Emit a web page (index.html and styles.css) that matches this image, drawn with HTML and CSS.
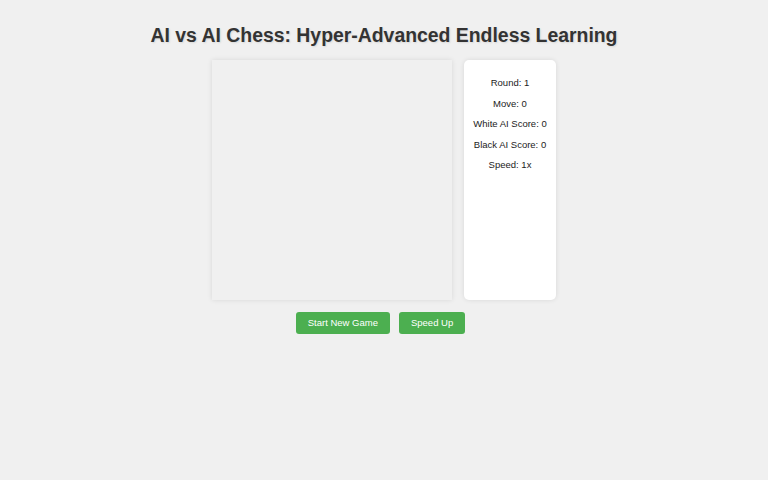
FILE: index.html
```html
<!DOCTYPE html>
<html>
<head>
<meta charset="utf-8">
<link rel="stylesheet" href="styles.css">
</head>
<body>
<div class="page">
  <h1 class="title">AI vs AI Chess: Hyper-Advanced Endless Learning</h1>
  <div class="game">
    <div class="board"></div>
    <div class="stats">
      <p class="stat">Round: 1</p>
      <p class="stat">Move: 0</p>
      <p class="stat">White AI Score: 0</p>
      <p class="stat">Black AI Score: 0</p>
      <p class="stat">Speed: 1x</p>
    </div>
  </div>
  <div class="controls">
    <button class="btn">Start New Game</button>
    <button class="btn">Speed Up</button>
  </div>
</div>
</body>
</html>
```
FILE: styles.css
```css
html, body {
  margin: 0;
  padding: 0;
  background: #f0f0f0;
  font-family: "Liberation Sans", Arial, sans-serif;
  color: #333;
}
.page {
  display: flex;
  flex-direction: column;
  align-items: center;
  padding-top: 23px;
}
.title {
  margin: 0 0 13px;
  font-size: 19.4px;
  line-height: 24px;
  font-weight: bold;
  color: #333;
  text-shadow: 1px 1px 2px rgba(0,0,0,0.1);
}
.game {
  display: flex;
  gap: 12px;
}
.board {
  width: 240px;
  height: 240px;
  background: #f0f0f0;
  box-shadow: 0 0 5px rgba(0,0,0,0.1);
}
.stats {
  width: 92px;
  height: 240px;
  box-sizing: border-box;
  background: #fff;
  border-radius: 5px;
  box-shadow: 0 0 5px rgba(0,0,0,0.1);
  padding: 8px 0;
  text-align: center;
}
.stat {
  margin: 9px 0;
  font-size: 9.5px;
  line-height: 11.5px;
  color: #222;
}
.controls {
  display: flex;
  gap: 9px;
  margin-top: 12px;
  padding-right: 7px;
}
.btn {
  font-family: "Liberation Sans", Arial, sans-serif;
  font-size: 9.5px;
  line-height: 12px;
  color: #fff;
  background: #4caf50;
  border: none;
  border-radius: 3px;
  padding: 5px 12px;
  height: 22px;
}
```
